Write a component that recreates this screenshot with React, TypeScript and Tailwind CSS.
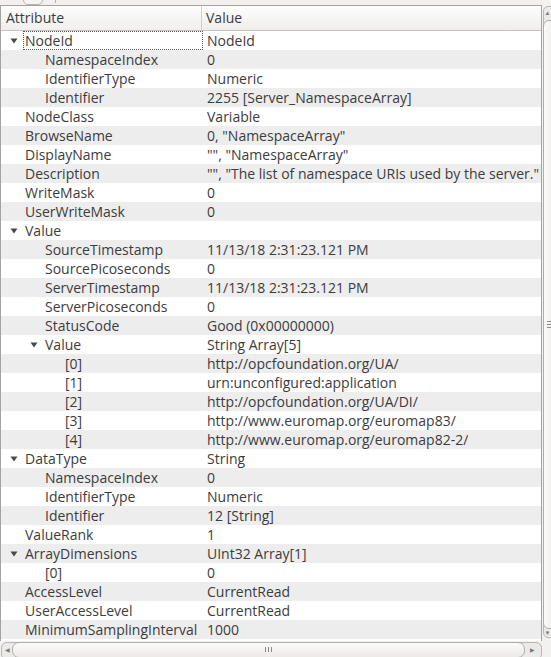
import React from 'react';

interface Row {
  level: number;
  expander?: boolean;
  attr: string;
  value: string;
}

const rows: Row[] = [
  { level: 0, expander: true, attr: 'NodeId', value: 'NodeId' },
  { level: 1, attr: 'NamespaceIndex', value: '0' },
  { level: 1, attr: 'IdentifierType', value: 'Numeric' },
  { level: 1, attr: 'Identifier', value: '2255 [Server_NamespaceArray]' },
  { level: 0, attr: 'NodeClass', value: 'Variable' },
  { level: 0, attr: 'BrowseName', value: '0, "NamespaceArray"' },
  { level: 0, attr: 'DisplayName', value: '"", "NamespaceArray"' },
  { level: 0, attr: 'Description', value: '"", "The list of namespace URIs used by the server."' },
  { level: 0, attr: 'WriteMask', value: '0' },
  { level: 0, attr: 'UserWriteMask', value: '0' },
  { level: 0, expander: true, attr: 'Value', value: '' },
  { level: 1, attr: 'SourceTimestamp', value: '11/13/18 2:31:23.121 PM' },
  { level: 1, attr: 'SourcePicoseconds', value: '0' },
  { level: 1, attr: 'ServerTimestamp', value: '11/13/18 2:31:23.121 PM' },
  { level: 1, attr: 'ServerPicoseconds', value: '0' },
  { level: 1, attr: 'StatusCode', value: 'Good (0x00000000)' },
  { level: 1, expander: true, attr: 'Value', value: 'String Array[5]' },
  { level: 2, attr: '[0]', value: 'http://opcfoundation.org/UA/' },
  { level: 2, attr: '[1]', value: 'urn:unconfigured:application' },
  { level: 2, attr: '[2]', value: 'http://opcfoundation.org/UA/DI/' },
  { level: 2, attr: '[3]', value: 'http://www.euromap.org/euromap83/' },
  { level: 2, attr: '[4]', value: 'http://www.euromap.org/euromap82-2/' },
  { level: 0, expander: true, attr: 'DataType', value: 'String' },
  { level: 1, attr: 'NamespaceIndex', value: '0' },
  { level: 1, attr: 'IdentifierType', value: 'Numeric' },
  { level: 1, attr: 'Identifier', value: '12 [String]' },
  { level: 0, attr: 'ValueRank', value: '1' },
  { level: 0, expander: true, attr: 'ArrayDimensions', value: 'UInt32 Array[1]' },
  { level: 1, attr: '[0]', value: '0' },
  { level: 0, attr: 'AccessLevel', value: 'CurrentRead' },
  { level: 0, attr: 'UserAccessLevel', value: 'CurrentRead' },
  { level: 0, attr: 'MinimumSamplingInterval', value: '1000' },
];

// indentation per tree level (expander slot follows)
const indent = ['pl-[9px]', 'pl-[29px]', 'pl-[49px]'];

const Arrow = () => (
  <svg width="8" height="6" viewBox="0 0 8 6">
    <path d="M0.5 0.5 L7.5 0.5 L4 5.5 Z" fill="#4a4a4a" />
  </svg>
);

const Grip = ({ vertical }: { vertical?: boolean }) => (
  <div className={`flex gap-[2px] ${vertical ? 'flex-col' : ''}`}>
    {[0, 1, 2].map(i => (
      <div key={i} className={vertical ? 'w-[6px] h-px bg-[#8a8884]' : 'w-px h-[5px] bg-[#8a8884]'} />
    ))}
  </div>
);

const App: React.FC = () => {
  return (
    <div className="w-[551px] h-[657px] bg-[#f2f1f0] overflow-hidden text-[14px] text-[#3c3c3c] font-['Open_Sans','Noto_Sans',sans-serif] leading-[19px]">
      {/* toolbar remnant */}
      <div className="h-[5px] flex items-end gap-[12px] pl-[23px] overflow-hidden">
        <div className="w-[20px] h-[10px] rounded-b-[5px] border border-[#b5b3ae] bg-[#f6f5f4]" />
        <div className="w-px h-[3px] mb-[2px] bg-[#b5b3ae]" />
      </div>

      <div className="flex h-[636px]">
        {/* tree view */}
        <div className="w-[542px] shrink-0 border-l border-t border-r border-[#a5a39e] bg-white overflow-hidden">
          <div className="flex h-[25px] bg-gradient-to-b from-[#fdfdfd] to-[#efeeed] border-b border-[#c6c4c0]">
            <div className="w-[201px] border-r border-[#d2d0cc] pl-[5px] leading-[24px]">Attribute</div>
            <div className="flex-1 pl-[4px] leading-[24px]">Value</div>
          </div>
          {rows.map((r, i) => (
            <div key={i} className={`flex h-[19px] whitespace-nowrap ${i % 2 === 1 ? 'bg-[#ededed]' : 'bg-white'}`}>
              <div className={`relative flex w-[202px] shrink-0 ${indent[r.level]}`}>
                <div className="w-[15px] shrink-0 flex items-center">{r.expander && <Arrow />}</div>
                {i === 0 ? (
                  <div className="flex-1 -ml-[2px] pl-px border border-dotted border-[#555] leading-[17px]">{r.attr}</div>
                ) : (
                  <span>{r.attr}</span>
                )}
              </div>
              <div className="pl-[4px] overflow-hidden">{r.value}</div>
            </div>
          ))}
        </div>

        {/* vertical scrollbar */}
        <div className="flex-1 pt-px pl-px">
          <div className="w-[14px] h-[632px] rounded-[5px] border border-[#b9b7b2] bg-[#ebeae8] flex flex-col items-center">
            <div className="h-[13px] text-[6px] leading-[13px] text-[#7a7a7a] -ml-[5px]">▲</div>
            <div className="flex-1 w-[14px] -mx-px rounded-[6px] border border-[#b0aea9] bg-gradient-to-r from-[#fbfbfa] to-[#eceae7] flex items-center pl-[3px]">
              <Grip vertical />
            </div>
            <div className="h-[8px] text-[6px] leading-[8px] text-[#7a7a7a] -ml-[5px]">▼</div>
          </div>
        </div>
      </div>

      {/* horizontal scrollbar */}
      <div className="h-[16px] pl-px pt-px">
        <div className="w-[541px] h-[18px] rounded-[6px] border border-[#b9b7b2] bg-[#ebeae8] flex items-start">
          <div className="w-[10px] h-[16px] text-[6px] leading-[14px] text-[#7a7a7a] pl-[3px]">◀</div>
          <div className="w-[513px] h-[16px] -mt-px rounded-[7px] border border-[#b0aea9] bg-gradient-to-b from-[#fbfbfa] to-[#eceae7] flex justify-center pt-[4px]">
            <Grip />
          </div>
          <div className="h-[16px] text-[6px] leading-[14px] text-[#7a7a7a] pl-[5px]">▶</div>
        </div>
      </div>
    </div>
  );
};

export default App;
